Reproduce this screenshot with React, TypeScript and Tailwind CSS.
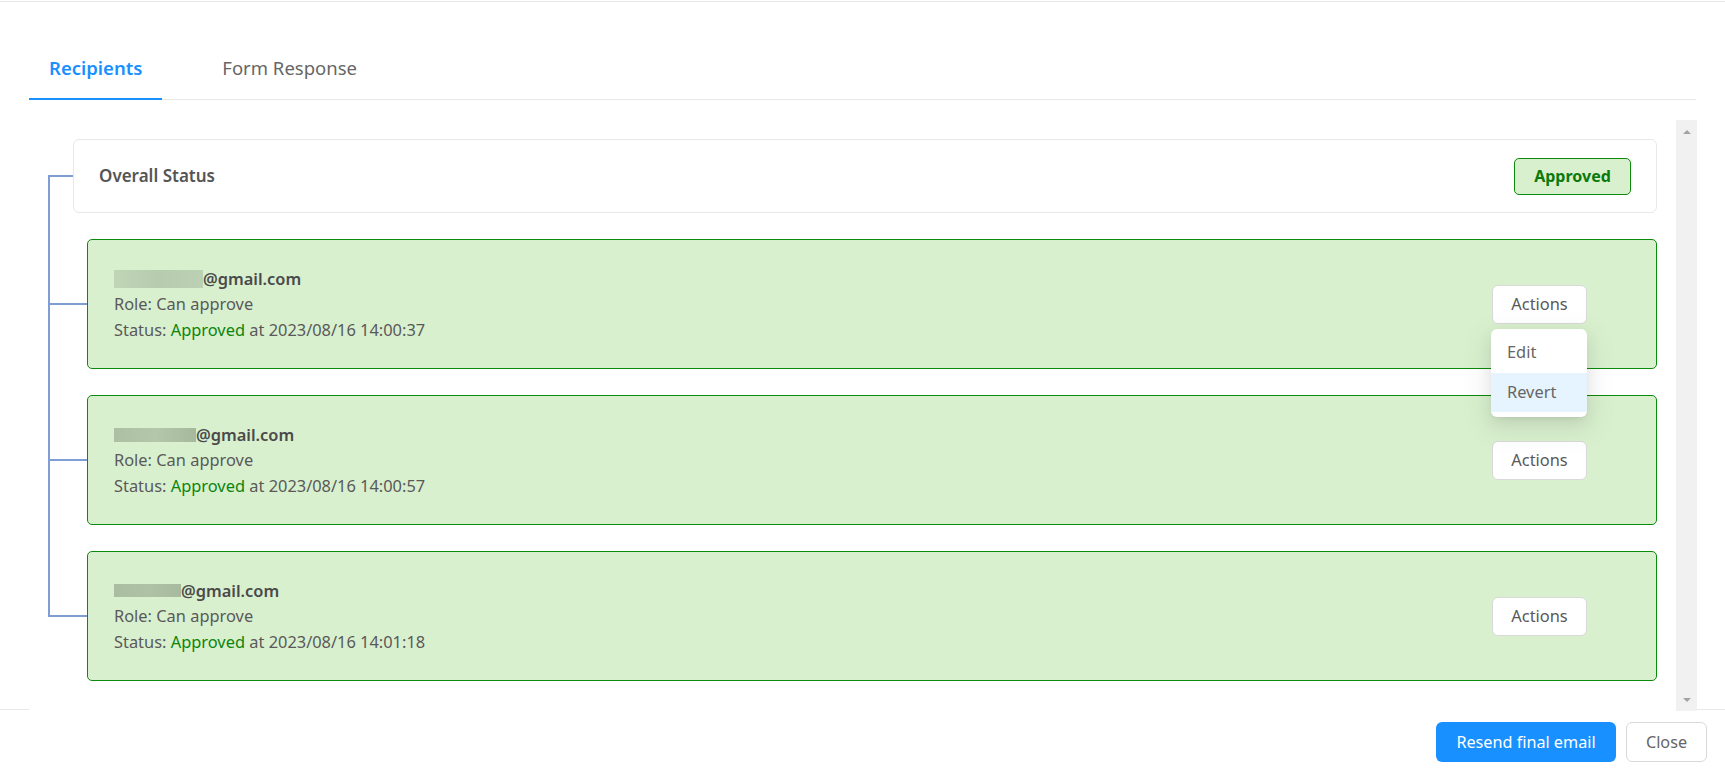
import React from "react";

const LINE = "border-[#7f9fd4]";

type Recipient = {
  mask: string;
  maskClass: string;
  at: string;
  menu?: boolean;
};

const recipients: Recipient[] = [
  { mask: "w-[89px] h-[18px]", maskClass: "bg-gradient-to-r from-[#c0d4b6] via-[#b7ccae] to-[#bcd0b3]", at: "2023/08/16 14:00:37", menu: true },
  { mask: "w-[82px] h-[14px]", maskClass: "bg-gradient-to-r from-[#adbfa3] via-[#b5c7ab] to-[#a7b99d]", at: "2023/08/16 14:00:57" },
  { mask: "w-[67px] h-[13px]", maskClass: "bg-gradient-to-r from-[#abbda1] via-[#b0c2a6] to-[#a8ba9e]", at: "2023/08/16 14:01:18" },
];

function Branch({ first, last, width, children }: { first?: boolean; last?: boolean; width: string; children: React.ReactNode }) {
  return (
    <>
      <div className="flex">
        <div className={`flex flex-col shrink-0 ${width}`}>
          <div className={`flex-1 ${first ? "" : `border-l-2 ${LINE}`}`} />
          <div className={`flex-1 border-t-2 ${LINE} ${last ? "" : "border-l-2"}`} />
        </div>
        {children}
      </div>
      {!last && <div className={`h-[26px] w-0 border-l-2 ${LINE}`} />}
    </>
  );
}

function RecipientCard({ r }: { r: Recipient }) {
  return (
    <div className="flex-1 h-[130px] flex items-center justify-between border border-[#0b8a0b] bg-[#d9f0cf] rounded-[5px] pl-[26px] pr-[69px]">
      <div className="text-[16.4px] leading-[25.5px] text-[#595959]">
        <div className="flex items-center font-semibold text-[#4a4a4a]">
          <span className={`inline-block ${r.mask} ${r.maskClass}`} />
          <span>@gmail.com</span>
        </div>
        <div>Role: Can approve</div>
        <div>
          Status: <span className="text-[#0b840b]">Approved</span> at {r.at}
        </div>
      </div>
      <div className="relative">
        <button className="w-[95px] h-[39px] bg-white border border-[#d9d9d9] rounded-[6px] text-[16.4px] text-[#595959]">
          Actions
        </button>
        {r.menu && (
          <div className="absolute z-20 top-full mt-[5px] -left-px w-[96px] bg-white rounded-[6px] pt-[4px] pb-[5px] overflow-hidden shadow-[0_6px_16px_rgba(0,0,0,0.08),0_3px_6px_-4px_rgba(0,0,0,0.12),0_9px_28px_8px_rgba(0,0,0,0.05)]">
            <div className="h-[40px] flex items-center pl-[16px] text-[16.4px] text-[#666]">Edit</div>
            <div className="h-[39px] flex items-center pl-[16px] bg-[#e6f4ff] text-[16.4px] text-[#666]">Revert</div>
          </div>
        )}
      </div>
    </div>
  );
}

export default function App() {
  return (
    <div className="w-[1725px] h-[771px] bg-white overflow-hidden" style={{ fontFamily: '"Noto Sans", "Open Sans", sans-serif' }}>
      <div className="h-[2px] border-b border-[#e8e8e8]" />

      {/* Tabs */}
      <div className="mt-[34px] mx-[29px] flex gap-[40px] border-b border-[#e8e8e8]">
        <div className="relative h-[63px] px-[20px] flex items-center text-[18.5px] font-semibold text-[#1890ff]">
          Recipients
          <span className="absolute left-0 right-0 -bottom-px h-[2px] bg-[#1890ff]" />
        </div>
        <div className="h-[63px] px-[20px] flex items-center text-[18.5px] text-[#666]">Form Response</div>
      </div>

      {/* Scroll area */}
      <div className="relative z-10 mt-[20px] ml-[29px] w-[1668px] h-[591px] bg-white flex">
        <div className="flex-1 overflow-hidden px-[19px] pt-[19px]">
          <Branch first width="w-[25px]">
            <div className="flex-1 h-[74px] flex items-center justify-between border border-[#e8e8e8] rounded-[6px] pl-[25px] pr-[25px]">
              <span className="text-[17px] font-semibold text-[#555]">Overall Status</span>
              <span className="w-[117px] h-[37px] flex items-center justify-center border border-[#0b8a0b] bg-[#d9f0cf] rounded-[5px] text-[16px] font-bold text-[#0b7a0b]">
                Approved
              </span>
            </div>
          </Branch>
          {recipients.map((r, i) => (
            <Branch key={r.at} last={i === recipients.length - 1} width="w-[39px]">
              <RecipientCard r={r} />
            </Branch>
          ))}
        </div>
        <div className="w-[21px] bg-[#f1f1f1] flex flex-col items-center justify-between">
          <span className="mt-[10px] w-0 h-0 border-x-[4px] border-x-transparent border-b-[4px] border-b-[#a3a3a3]" />
          <span className="mb-[9px] w-0 h-0 border-x-[4px] border-x-transparent border-t-[4px] border-t-[#a3a3a3]" />
        </div>
      </div>

      {/* Footer */}
      <div className="-mt-[2px] border-t border-[#e8e8e8] pt-[12px] pr-[18px] flex justify-end gap-[10px]">
        <button className="w-[180px] h-[40px] rounded-[6px] bg-[#1890ff] text-white text-[16.2px]">Resend final email</button>
        <button className="w-[81px] h-[40px] rounded-[6px] border border-[#d9d9d9] bg-white text-[#666] text-[16.2px]">Close</button>
      </div>
    </div>
  );
}
